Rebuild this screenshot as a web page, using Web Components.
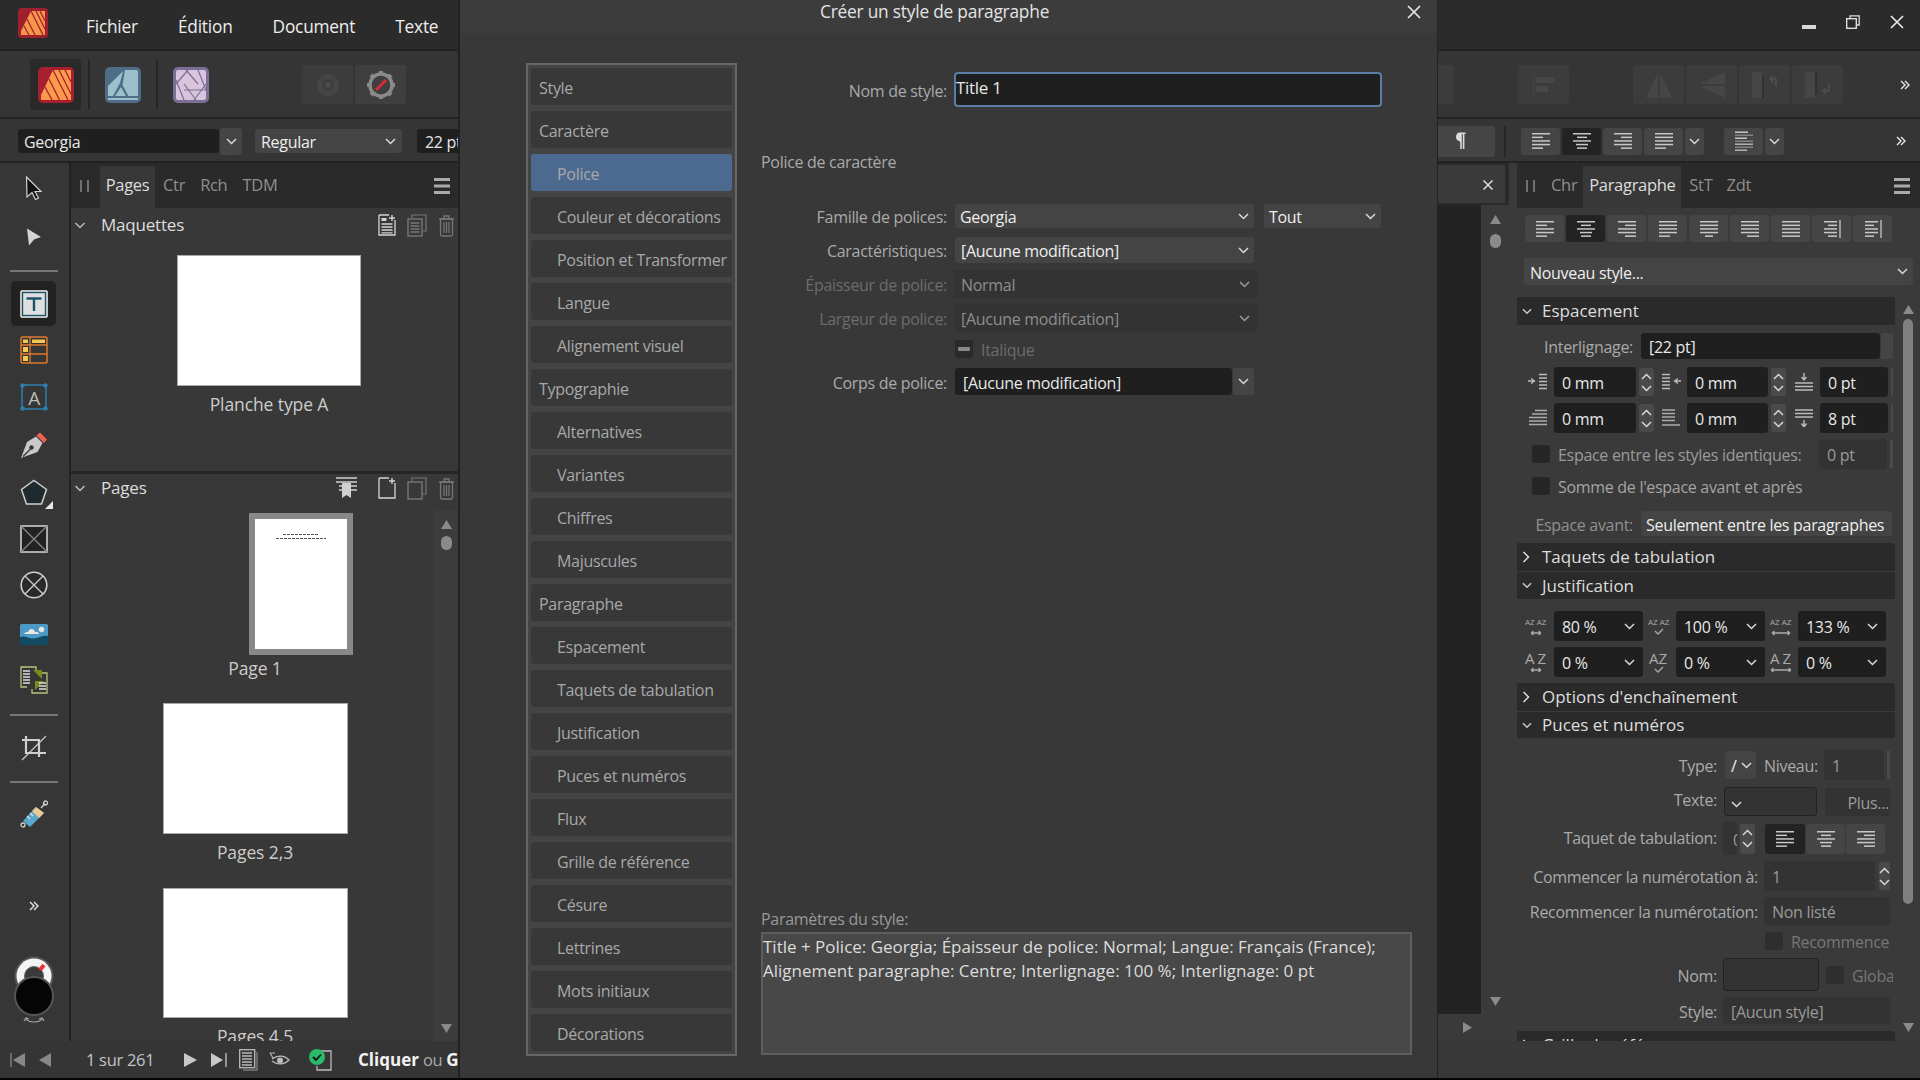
<!DOCTYPE html>
<html lang="fr"><head><meta charset="utf-8"><title>Créer un style de paragraphe</title>
<style>
html,body{margin:0;padding:0;background:#050505;width:1920px;height:1080px;overflow:hidden}
body{font:16px/22px "Open Sans","Noto Sans",sans-serif;letter-spacing:-.3px;color:#ccc}
</style></head><body>
<af-app></af-app>
<script>
const svg=(w,h,inner,vb)=>`<svg xmlns="http://www.w3.org/2000/svg" width="${w}" height="${h}" viewBox="${vb||`0 0 ${w} ${h}`}">${inner}</svg>`;
const bars=(spec,c='#c8c8c8',extra='')=>{
  return svg(18,18,spec.map((s,i)=>`<rect x="${s[0]}" y="${1+i*3.6}" width="${s[1]}" height="1.5" fill="${c}"/>`).join('')+extra);
};
const hb=(a)=>`<path d="M${a} 0v18" stroke="#c8c8c8" stroke-width="1.3"/>`;
const ICONS={
 al:bars([[0,18],[0,11],[0,18],[0,18],[0,11]]),
 ac:bars([[0,18],[4,10],[0,18],[3,12],[4,10]]),
 ar:bars([[0,18],[7,11],[0,18],[0,18],[7,11]]),
 aj:bars([[0,18],[0,18],[0,18],[0,18],[0,11]]),
 ajc:bars([[0,18],[0,18],[0,18],[0,18],[5,8]]),
 ajr:bars([[0,18],[0,18],[0,18],[0,18],[6,12]]),
 aja:bars([[0,18],[0,18],[0,18],[0,18],[0,18]]),
 asp:bars([[1,13],[5,9],[1,13],[1,13],[5,9]],'#c8c8c8',hb(17)),
 asq:bars([[1,13],[1,9],[1,13],[1,13],[1,9]],'#c8c8c8',hb(17)),
 lead:svg(18,20,[[0,13,'#d0d0d0'],[0,18,'#888'],[0,12,'#d0d0d0'],[0,18,'#888'],[0,18,'#bbb'],[0,18,'#888'],[0,12,'#bbb']].map((l,i)=>`<rect x="${l[0]}" y="${i*3+.5}" width="${l[1]}" height="1.4" fill="${l[2]}"/>`).join('')),
 burger:svg(16,16,'<rect width="16" height="3" y="0" fill="#aaa"/><rect width="16" height="3" y="6.5" fill="#aaa"/><rect width="16" height="3" y="13" fill="#aaa"/>'),
 dbl:svg(10,10,'<path d="M1 1l4 4-4 4M5 1l4 4-4 4" fill="none" stroke="#e6e6e6" stroke-width="1.4"/>'),
 para:svg(10,18,'<path d="M3.5 .5h6v1.600H8.400V17H6.800V2.100H5.800V17H4.200V9.400C1.800 9.300 0 7.500 0 5S1.500 .5 3.500 .5z" fill="#ddd"/>'),
 x:svg(14,14,'<path d="M1 1l12 12M13 1L1 13" stroke="#e8e8e8" stroke-width="1.7"/>'),
 xs:svg(10,10,'<path d="M.5.5l9 9M9.500.5l-9 9" stroke="#ddd" stroke-width="1.5"/>'),
 min:svg(14,4,'<rect width="14" height="4" y="0" fill="#d8d8d8"/>'),
 rest:svg(14,14,'<path d="M4 3.500V.8h9.200v9.200H10.500" fill="none" stroke="#ddd" stroke-width="1.3"/><rect x=".7" y="3.700" width="9.600" height="9.600" fill="none" stroke="#ddd" stroke-width="1.400"/>'),
 up:svg(11,11,'<path d="M5.500 1L11 10H0z" fill="#8a8a8a"/>'),
 down:svg(11,11,'<path d="M5.500 10L11 1H0z" fill="#8a8a8a"/>'),
 right:svg(11,11,'<path d="M10 5.500L1 11V0z" fill="#8a8a8a"/>'),
 pub:svg(30,30,'<rect width="30" height="30" rx="4" fill="#9f1f2e"/><path d="M3 27v-4L13 3h14v24z" fill="#f7964b"/><path d="M13 3l12 24M18 3l9 18M22 3l5 10M9 11l8 16M6 18l5 9" stroke="#9f1f2e" stroke-width="1.200" fill="none"/>'),
 pub2:svg(36,36,'<rect width="36" height="36" rx="5" fill="#a81f30"/><path d="M3 33v-5L15 3h18v30z" fill="#fb9a4d"/><path d="M15 3l15 30M21 3l12 24M27 3l6 12M11 12l10.500 21M7 20l7 13" stroke="#a81f30" stroke-width="1.300" fill="none"/>'),
 des:svg(36,36,'<rect width="36" height="36" rx="5" fill="#4f6d87"/><path d="M20 3h11a2 2 0 012 2v24H23.500l-6-11zM3 19L18 4l-3 12-7 13H3zM10 29l6-9 5 9zM3 31h30v2H3z" fill="#9cc1cc"/>'),
 pho:svg(36,36,'<rect width="36" height="36" rx="5" fill="#7b6f95"/><rect x="3" y="3" width="30" height="30" rx="2" fill="#d9c4de"/><path d="M3 17L15 3M13 3l12 14M25 3l8 20H11M33 17L21 33M23 33L11 17M11 33L3 13" stroke="#7b6f95" stroke-width="1.200" fill="none"/>'),
 gearoff:svg(28,28,'<circle cx="14" cy="14" r="11" fill="#454545"/><circle cx="14" cy="14" r="5.500" fill="#3c3c3c"/><circle cx="14" cy="14" r="3" fill="#4c4c4c"/>'),
 gear:svg(28,28,'<circle cx="14" cy="14" r="11" fill="none" stroke="#8a8a8a" stroke-width="3.500"/><path d="M14 0v4M14 24v4M0 14h4M24 14h4M4 4l3 3M21 21l3 3M4 24l3-3M21 7l3-3" stroke="#8a8a8a" stroke-width="4"/><circle cx="14" cy="14" r="9" fill="#3f3f3f"/><path d="M9 19L19 9" stroke="#d92b3a" stroke-width="2.800"/>'),
 dis1:svg(22,22,'<path d="M1 0v22" stroke="#474747" stroke-width="1"/><rect x="3" y="3" width="19" height="6" fill="#474747"/><rect x="3" y="12" width="12" height="6" fill="#474747"/>'),
 dis2:svg(26,26,'<path d="M12 0v26H0zM14 0v26h12z" fill="#464646"/>'),
 dis3:svg(26,26,'<path d="M26 0v12L0 12zM26 14v12L0 14z" fill="#464646"/>'),
 dis4:svg(26,26,'<rect x="0" width="10" height="26" fill="#464646"/><path d="M11 4v22" stroke="#2e2e2e" stroke-width="1.500"/><path d="M24 14V7h-6m3-3l-3 3 3 3" fill="none" stroke="#505050" stroke-width="1.500"/>'),
 dis5:svg(26,26,'<rect x="0" width="10" height="26" fill="#464646"/><path d="M11 0v22" stroke="#2e2e2e" stroke-width="1.500"/><path d="M24 12v7h-6m3-3l-3 3 3 3" fill="none" stroke="#505050" stroke-width="1.500"/>'),
 arrow:svg(18,24,'<path d="M1.500 1L16 15.500h-6l3.500 6.500-3 1.500L7 16.500 2 21z" fill="#111" stroke="#cfcfcf" stroke-width="1.200"/>'),
 node:svg(16,18,'<path d="M1 .5L15 9l-7 2.500L3 17.500z" fill="#d4d4d4"/>'),
 ttool:svg(28,28,'<rect x=".5" y=".5" width="27" height="27" rx="1.500" fill="#dfdfdf" stroke="#c4c4c4"/><rect x="2.500" y="2.500" width="23" height="23" fill="none" stroke="#1d5568" stroke-width="1.400"/><path d="M6.500 8.500h15M14 8v13" stroke="#1d5568" stroke-width="2.400" fill="none"/>'),
 table:svg(28,28,'<rect x="1" y="1" width="26" height="26" rx="1.500" fill="none" stroke="#e0792d" stroke-width="1.500"/><path d="M1 9h26M1 18h26M10 1v26" stroke="#e0792d" stroke-width="1.300"/><g fill="#f2c84f"><rect x="3" y="3.500" width="5" height="3.500"/><rect x="12" y="3.500" width="13" height="3.500"/><rect x="3" y="11" width="5" height="5"/><rect x="3" y="20" width="5" height="5"/></g>'),
 aframe:svg(28,28,'<rect x="2" y="2" width="24" height="24" fill="none" stroke="#2f7eb0" stroke-width="1.500"/><g fill="#2f7eb0"><circle cx="2.500" cy="2.500" r="2.200"/><circle cx="25.500" cy="2.500" r="2.200"/><circle cx="2.500" cy="25.500" r="2.200"/><circle cx="25.500" cy="25.500" r="2.200"/></g><text x="14" y="21.500" text-anchor="middle" font-family="Open Sans" font-size="19" fill="#bdbdbd">A</text>'),
 pen:svg(28,28,'<path d="M20 1.500l7 7-3 3.500-7.500-7.500z" fill="#f2604f"/><path d="M16 5.500l6.500 6.500-5 9L1 27l6-16z" fill="#c9c9c9"/><path d="M3 25.500l7.500-7.500" stroke="#363636" stroke-width="1.200"/><circle cx="11.500" cy="16.500" r="2.200" fill="#363636"/>'),
 penta:svg(34,34,'<path d="M14 1.500L26.500 10.500 21.500 25H6.500L1.500 10.500z" fill="#1e2a2e" stroke="#cfcfcf" stroke-width="1.500"/><path d="M33 22v8h-8z" fill="#e8e8e8"/>'),
 rframe:svg(28,28,'<rect x="1" y="1" width="26" height="26" fill="#222" stroke="#cfcfcf" stroke-width="1.600"/><path d="M1 1l26 26M27 1L1 27" stroke="#888" stroke-width="1.200"/>'),
 cframe:svg(28,28,'<circle cx="14" cy="14" r="12.800" fill="#2a2a2a" stroke="#cfcfcf" stroke-width="1.600"/><path d="M5 5l18 18M23 5L5 23" stroke="#cfcfcf" stroke-width="1.300"/>'),
 image:svg(28,21,'<rect width="28" height="21" rx="1.500" fill="#4a9ac5"/><path d="M0 13c5-2 9 2 14 1.500s9-3.500 14-2.500v8a1 1 0 01-1 1H1a1 1 0 01-1-1z" fill="#114a63"/><path d="M4 10c1-2 3-2 4-2 1-4 6-4 7 0h2c1 0 2 1 2 2z" fill="#e8e8e8"/><circle cx="21.500" cy="5.500" r="2.800" fill="#e3e3e3"/>'),
 linked:svg(28,28,'<path d="M16 5V1H1v20h6M12 23v4h15V7h-5" fill="none" stroke="#b8c47e" stroke-width="1.300"/><path d="M13 4h9v9zM15 24v-9h9z" fill="#7b8c1e"/><path d="M3 5h7M3 8h7M3 11h7M3 14h7M3 17h7M19 17h7M19 20h7M19 23h7" stroke="#ddd" stroke-width="1.500"/>'),
 crop:svg(26,26,'<path d="M1 5h17v17M5 1v17h20" fill="none" stroke="#cfcfcf" stroke-width="2.200"/><path d="M1 25L25 1" stroke="#cfcfcf" stroke-width="1.100"/>'),
 drop:svg(28,28,'<path d="M3 21L16 7l8 6L10 27z" fill="#5aa7cf"/><path d="M12 11L16 7l8 6-5 5z" fill="#eac894"/><path d="M7 16l3 3M10 13l3 3" stroke="#e6e6e6" stroke-width="1.100"/><path d="M21 8L25 3.500" stroke="#d0d0d0" stroke-width="1.300"/><circle cx="25.500" cy="3" r="2" fill="none" stroke="#ccc" stroke-width="1.300"/><circle cx="3" cy="25" r="2" fill="none" stroke="#ccc" stroke-width="1.300"/>'),
 swatch:svg(42,70,'<circle cx="21" cy="20" r="19.500" fill="#555"/><circle cx="21" cy="20" r="17.500" fill="#f4f4f4"/><circle cx="21" cy="20" r="9.500" fill="#3a3a3a" stroke="#666"/><path d="M31 9l-4 5" stroke="#f03030" stroke-width="4"/><circle cx="21" cy="40" r="20" fill="#555"/><circle cx="21" cy="40" r="18" fill="#050505"/><path d="M13 63c3 4 13 4 16 0M11 65l2-3 3 1M31 65l-2-3-3 1" fill="none" stroke="#aaa" stroke-width="1.200"/>'),
 pgadd:svg(18,22,'<path d="M1 1h10M1 1v20h16V6" fill="none" stroke="#d4d4d4" stroke-width="1.300"/><path d="M14 1v6M11 4h6" stroke="#d4d4d4" stroke-width="1.400"/><rect x="3.500" y="4" width="5" height="3" fill="#d4d4d4"/><path d="M3.500 10h11M3.500 13h11M3.500 16h11M3.500 18.800h11" stroke="#d4d4d4" stroke-width="1.300"/>'),
 pgcopy:svg(20,23,'<rect x="1" y="5" width="14" height="17" fill="none" stroke="#777" stroke-width="1.400"/><path d="M5 4V1h14v16h-3" fill="none" stroke="#777" stroke-width="1.200"/><path d="M3.500 9h9M3.500 12h9M3.500 15h9M3.500 18h9" stroke="#777" stroke-width="1.400"/>'),
 pgcopy2:svg(20,23,'<rect x="1" y="5" width="14" height="17" fill="none" stroke="#777" stroke-width="1.400"/><path d="M5 4V1h14v16h-3" fill="none" stroke="#777" stroke-width="1.200"/>'),
 trash:svg(17,23,'<path d="M1 5h15M6 5V2h5v3" fill="none" stroke="#777" stroke-width="1.300"/><rect x="2.500" y="5" width="12" height="17" rx="1.500" fill="none" stroke="#777" stroke-width="1.300"/><path d="M6 8v11M8.500 8v11M11 8v11" stroke="#777" stroke-width="1.200"/>'),
 master:svg(22,22,'<path d="M0 1h21M0 5h21M3 9h3M15 9h6M3 13h3M15 13h6" stroke="#d0d0d0" stroke-width="1.500"/><path d="M6 6h9v15l-4.500-3L6 21z" fill="#d0d0d0"/>'),
 pgnew:svg(18,22,'<path d="M1 1h10M1 1v20h16V6" fill="none" stroke="#d4d4d4" stroke-width="1.300"/><path d="M14 1v6M11 4h6" stroke="#d4d4d4" stroke-width="1.400"/>'),
 first:svg(16,16,'<path d="M1 1v14" stroke="#888" stroke-width="1.300"/><path d="M15 1v14L3 8z" fill="#888"/>'),
 prev:svg(12,16,'<path d="M12 1v14L0 8z" fill="#888"/>'),
 next:svg(13,16,'<path d="M0 1v14l13-7z" fill="#c8c8c8"/>'),
 last:svg(16,16,'<path d="M0 1v14l12-7z" fill="#c8c8c8"/><path d="M15 1v14" stroke="#c8c8c8" stroke-width="1.300"/>'),
 doc:svg(19,22,'<rect x=".7" y=".7" width="15" height="18" fill="none" stroke="#bbb" stroke-width="1.300"/><path d="M3 4h10M3 7h10M3 10h10M3 13h10M3 16h10" stroke="#bbb" stroke-width="1.500"/><path d="M4 21h14V3" fill="none" stroke="#999"/>'),
 eye:svg(21,16,'<path d="M3 7C8 3 15 3 20 8c-5 5-12 5-17 1" fill="none" stroke="#bbb" stroke-width="1.300"/><circle cx="11" cy="8.500" r="3" fill="#bbb"/><path d="M1 1l3 5M1 1l5 0" stroke="#bbb" stroke-width="1.200" fill="none"/>'),
 check:svg(23,22,'<path d="M11 2h11v19H8v-4" fill="none" stroke="#bbb" stroke-width="1.300"/><circle cx="8" cy="8" r="8" fill="#2aba6a"/><path d="M4 8l3 3 5-5.500" fill="none" stroke="#111" stroke-width="1.800"/>'),
 i1:svg(20,18,'<path d="M0 8h6M3 5.500L6.500 8 3 10.500" fill="none" stroke="#bbb" stroke-width="1.300"/><path d="M11 1.500h8M11 5h8M11 8.500h8M11 12h8M11 15.500h8" stroke="#bbb" stroke-width="1.500"/>'),
 i2:svg(20,18,'<path d="M20 8h-6M17 5.500L13.500 8l3.500 2.500" fill="none" stroke="#bbb" stroke-width="1.300"/><path d="M1 1.500h8M1 5h8M1 8.500h8M1 12h8M1 15.500h8" stroke="#bbb" stroke-width="1.500"/>'),
 i3:svg(18,18,'<path d="M9 0v6M6.500 4L9 7l2.500-3" fill="none" stroke="#bbb" stroke-width="1.400"/><path d="M0 10h18M0 13.500h18M0 17h18" stroke="#bbb" stroke-width="1.400"/>'),
 i4:svg(18,18,'<path d="M6 1.500h12M3 5h15M0 8.500h18M0 12h18M0 15.500h18" stroke="#aaa" stroke-width="1.500"/>'),
 i5:svg(18,18,'<path d="M0 1h13M0 4.500h13M0 8h13M0 11.500h13M0 16h18" stroke="#aaa" stroke-width="1.500"/>'),
 i6:svg(18,18,'<path d="M0 1h18M0 4.500h18M0 8h18" stroke="#bbb" stroke-width="1.400"/><path d="M9 11v6M6.500 14.500L9 18l2.500-3.500" fill="none" stroke="#bbb" stroke-width="1.400"/>'),
 i7:svg(22,22,'<g stroke="#aaa" fill="none" stroke-width="1.300"><path d="M6 18h10M6 18l2.500-2M6 18l2.500 2M16 18l-2.500-2M16 18l-2.500 2"/></g><text x="0" y="10" font-family="Open Sans" font-size="8" fill="#aaa" letter-spacing="0">AZ AZ</text>'),
 i8:svg(22,22,'<path d="M7 16l3 3 5-5" stroke="#aaa" stroke-width="1.300" fill="none"/><text x="0" y="10" font-family="Open Sans" font-size="8" fill="#aaa" letter-spacing="0">AZ AZ</text>'),
 i9:svg(22,22,'<g stroke="#aaa" fill="none" stroke-width="1.300"><path d="M2 18h18M2 18l2.500-2M2 18l2.500 2M20 18l-2.500-2M20 18l-2.500 2"/></g><text x="0" y="10" font-family="Open Sans" font-size="8" fill="#aaa" letter-spacing="0">AZ AZ</text>'),
 i10:svg(22,24,'<g stroke="#aaa" fill="none" stroke-width="1.300"><path d="M6 20h10M6 20l2.500-2M6 20l2.500 2M16 20l-2.500-2M16 20l-2.500 2"/></g><text x="0" y="14" font-family="Open Sans" font-size="15" fill="#aaa" letter-spacing="3">AZ</text>'),
 i11:svg(22,24,'<path d="M7 19l3 3 5-5" stroke="#aaa" stroke-width="1.300" fill="none"/><text x="1" y="14" font-family="Open Sans" font-size="15" fill="#aaa" letter-spacing="0">AZ</text>'),
 i12:svg(22,24,'<g stroke="#aaa" fill="none" stroke-width="1.300"><path d="M1 20h20M1 20l2.500-2M1 20l2.500 2M21 20l-2.500-2M21 20l-2.500 2"/></g><text x="0" y="14" font-family="Open Sans" font-size="15" fill="#aaa" letter-spacing="3">AZ</text>'),
};
const BASE=`*{box-sizing:border-box}`;
function def(name,css,html){
  customElements.define(name,class extends HTMLElement{
    connectedCallback(){
      if(this.shadowRoot)return;
      const r=this.attachShadow({mode:'open'});
      r.innerHTML=`<style>${BASE}${css}</style>`+(typeof html==='function'?html(this):html);
    }
  });
}
const chev=(c='#d8d8d8',w=11,up=false)=>svg(w,7,`<path d="${up?'M1 6l4.500-4.500L10 6':'M1 1l4.500 4.500L10 1'}" fill="none" stroke="${c}" stroke-width="1.500"/>`,'0 0 11 7');

def('af-icon',`:host{display:inline-flex;flex:none;line-height:0}svg{display:block}`,h=>ICONS[h.getAttribute('n')]||'');

const KINDS={dark:['#1f1f1f','#e8e8e8'],mid:['#444','#eee'],dim:['#333','#8e8e8e'],off:['#333','#9a9a9a'],line:['#333','#aaa']};
def('af-field',`:host{display:flex;flex:none;align-items:center;justify-content:space-between;border-radius:3px;padding:2px 8px 0;overflow:hidden;white-space:nowrap}svg{margin-top:-2px}`,
 h=>{const k=KINDS[h.getAttribute('k')||'dark'];
  h.style.cssText+=`;width:${h.getAttribute('w')}px;height:${h.getAttribute('h')||30}px;background:${k[0]};color:${k[1]};`+(h.getAttribute('k')=='line'?'border:1px solid #222;':'');
  const c=h.hasAttribute('chev');
  return `<span><slot></slot></span>`+(c?chev(h.getAttribute('cc')||'#d8d8d8'):'');});

def('af-btn',`:host{display:flex;flex:none;align-items:center;justify-content:center;border-radius:3px}`,
 h=>{const bg=h.getAttribute('bg')||'#454545';
  h.style.cssText+=`;width:${h.getAttribute('w')||39}px;height:${h.getAttribute('h')||27}px;background:${bg};`;
  return h.hasAttribute('chev')?chev():`<slot></slot>`;});

def('af-spin',`:host{display:flex;flex:none;flex-direction:column;align-items:center;justify-content:center;gap:5px;width:15px;height:28px;background:#4a4a4a;border-radius:3px}`,
 ()=>chev('#d8d8d8',11,true)+chev());

def('af-check',`:host{display:block;flex:none;width:18px;height:18px;background:#262626;border-radius:3px}`,'');

def('af-menubar',`:host{display:flex;align-items:center;height:51px;flex:none;background:#2b2b2b;border-bottom:2px solid #222;padding:4px 0 0 18px;color:#eee;font-size:17.3px;letter-spacing:-.2px}
 .b{margin-left:40px}`,
 `<af-icon n="pub" style="margin-bottom:7px"></af-icon><span style="margin-left:38px">Fichier</span><span class="b">Édition</span><span class="b">Document</span><span class="b">Texte</span>`);

def('af-toolbar',`:host{display:flex;align-items:center;height:68px;flex:none;background:#353535;border-bottom:2px solid #222;padding:1px 0 0 30px}
 .p{width:51px;height:51px;background:#2a2a2a;border-radius:3px;display:flex;align-items:center;justify-content:center}
 .s{width:2px;height:49px;background:#252525}`,
 `<div class="p"><af-icon n="pub2"></af-icon></div><div class="s" style="margin-left:7px"></div><af-icon n="des" style="margin-left:15px"></af-icon><div class="s" style="margin-left:15px"></div><af-icon n="pho" style="margin-left:15px"></af-icon>
 <af-btn w="51" h="39" bg="#3c3c3c" style="margin-left:93px"><af-icon n="gearoff"></af-icon></af-btn><af-btn w="51" h="39" bg="#3f3f3f" style="margin-left:2px"><af-icon n="gear"></af-icon></af-btn>`);

def('af-context',`:host{display:flex;align-items:center;height:44px;flex:none;background:#353535;border-bottom:2px solid #222;padding:2px 0 0 18px;overflow:hidden;color:#e6e6e6}`,
 `<af-field w="201" h="24" k="dark" style="padding-left:6px;color:#ccc">Georgia</af-field><af-btn w="22" h="27" chev style="margin-left:1px"></af-btn>
  <af-field w="147" h="24" k="mid" chev style="margin-left:13px;padding-left:6px;padding-right:6px">Regular</af-field><af-field w="60" h="24" k="dark" style="margin-left:15px">22 pt</af-field>`);

def('af-tools',`:host{display:flex;flex-direction:column;align-items:center;width:71px;flex:none;background:#363636;border-right:2px solid #222;padding-right:2px}
 .c{width:45px;display:flex;justify-content:center;flex:none}.s{width:48px;height:2px;background:#777;flex:none}
 .act{background:#222;border-radius:5px;height:45px;align-items:center}`,
 `<div class="c" style="margin-top:13px"><af-icon n="arrow"></af-icon></div>
  <div class="c" style="margin-top:28px"><af-icon n="node"></af-icon></div>
  <div class="s" style="margin-top:24px"></div>
  <div class="c act" style="margin-top:9px"><af-icon n="ttool"></af-icon></div>
  <div class="c" style="margin-top:10px"><af-icon n="table"></af-icon></div>
  <div class="c" style="margin-top:19px"><af-icon n="aframe"></af-icon></div>
  <div class="c" style="margin-top:20px"><af-icon n="pen"></af-icon></div>
  <div class="c" style="margin-top:20px"><af-icon n="penta" style="margin-left:6px"></af-icon></div>
  <div class="c" style="margin-top:12px"><af-icon n="rframe"></af-icon></div>
  <div class="c" style="margin-top:18px"><af-icon n="cframe"></af-icon></div>
  <div class="c" style="margin-top:25px"><af-icon n="image"></af-icon></div>
  <div class="c" style="margin-top:21px"><af-icon n="linked"></af-icon></div>
  <div class="s" style="margin-top:20px"></div>
  <div class="c" style="margin-top:19px"><af-icon n="crop"></af-icon></div>
  <div class="s" style="margin-top:20px"></div>
  <div class="c" style="margin-top:17px"><af-icon n="drop"></af-icon></div>
  <div class="c" style="margin-top:73px"><af-icon n="dbl"></af-icon></div>
  <div class="c" style="margin-top:45px"><af-icon n="swatch"></af-icon></div>`);

def('af-tabs',`:host{display:flex;align-items:flex-end;height:45px;flex:none;background:#2a2a2a;font-size:16.5px;color:#8f8f8f}
 .g{width:9px;height:12px;border:solid #707070;border-width:0 2px;margin-bottom:16px;flex:none}
 .t{height:42px;line-height:38px}.on{background:#383838;color:#ddd;text-align:center}
 .h{margin-left:auto;align-self:center}`,
 h=>{const o=JSON.parse(h.getAttribute('d'));
  return `<div class="g" style="margin-left:${o.g}px"></div>`+o.t.map(t=>`<div class="t ${t[2]?'on':''}" style="margin-left:${t[0]}px;${t[2]?'width:'+t[2]+'px':''}">${t[1]}</div>`).join('')+`<af-icon class="h" n="burger" style="margin-right:${o.r}px"></af-icon>`;});

def('af-phead',`:host{display:flex;align-items:center;flex:none;height:34px;color:#ddd;font-size:17px;letter-spacing:-.2px}
 .t{margin-left:15px;margin-top:-1px}.c{margin-left:3px;display:flex}.k{margin-left:auto;display:flex;align-items:center}`,
 h=>`<span class="c">${chev('#bbb',12)}</span><span class="t"><slot></slot></span><span class="k"><slot name="k"></slot></span>`);

def('af-thumb',`:host{display:flex;flex-direction:column;align-items:center;flex:none}
 .p{background:#fff;border:1px solid #aaa;flex:none}.l{font-size:17.5px;color:#ccc;letter-spacing:-.1px;line-height:22px}`,
 h=>`<div class="p" style="width:${h.getAttribute('w')}px;height:${h.getAttribute('ht')}px"></div><div class="l" style="margin-top:${h.getAttribute('lm')}px"><slot></slot></div>`);

def('af-pages',`:host{display:flex;flex-direction:column;width:387px;flex:none;background:#383838;min-height:0}
 .m{height:263px;flex:none;display:flex;flex-direction:column;align-items:center;background:#383838}
 af-phead{width:100%}
 .d{height:3px;background:#252525;flex:none}
 .ic{display:flex;align-items:center}
 .main{flex:1;display:flex;min-height:0;margin-top:8px}
 .list{width:363px;flex:none;overflow:hidden;display:flex;flex-direction:column;align-items:center;padding:3px 0 0 5px}
 .sel{width:185px;display:flex;justify-content:flex-end;flex:none;margin-right:-1px}
 .frame{width:104px;height:142px;background:#888;padding:6px;margin-right:-5px;flex:none}
 .pg{width:92px;height:130px;background:#fff;padding-top:15px}
 .gk{height:1px;margin:0 auto 3px;background:repeating-linear-gradient(90deg,#555 0 3px,#fff 3px 4px)}
 .l{font-size:17.5px;color:#ccc;letter-spacing:-.1px;line-height:22px;flex:none}
 .sb{width:24px;flex:none;background:#3c3c3c;display:flex;flex-direction:column;align-items:center;padding:9px 0 0 1px}
 .dot{width:11px;height:14px;background:#8a8a8a;border-radius:6px;margin-top:6px}`,
 `<af-tabs d='{"g":9,"r":8,"t":[[11,"Pages",55],[8,"Ctr"],[15,"Rch"],[15,"TDM"]]}'></af-tabs>
 <div class="m"><af-phead>Maquettes<div class="ic" slot="k"><af-icon n="pgadd"></af-icon><af-icon n="pgcopy" style="margin-left:11px"></af-icon><af-icon n="trash" style="margin:0 3px 0 11px"></af-icon></div></af-phead>
 <af-thumb w="184" ht="131" lm="7" style="margin-top:13px;margin-left:9px">Planche type A</af-thumb></div>
 <div class="d"></div>
 <af-phead style="height:28px">Pages<div class="ic" slot="k"><af-icon n="master"></af-icon><af-icon n="pgnew" style="margin-left:20px"></af-icon><af-icon n="pgcopy2" style="margin-left:11px"></af-icon><af-icon n="trash" style="margin:0 3px 0 11px"></af-icon></div></af-phead>
 <div class="main"><div class="list">
   <div class="sel"><div class="frame"><div class="pg"><div class="gk" style="width:36px"></div><div class="gk" style="width:50px"></div></div></div></div>
   <div class="l" style="margin-top:2px">Page 1</div>
   <af-thumb w="185" ht="131" lm="7" style="margin-top:24px">Pages 2,3</af-thumb>
   <af-thumb w="185" ht="130" lm="7" style="margin-top:25px">Pages 4,5</af-thumb>
 </div><div class="sb"><af-icon n="up"></af-icon><div class="dot"></div><div style="flex:1"></div><af-icon n="down" style="margin-bottom:7px"></af-icon></div></div>`);

def('af-status',`:host{display:flex;align-items:center;height:37px;flex:none;background:#353535;overflow:hidden;white-space:nowrap;color:#c4c4c4;font-size:16.5px;padding-left:10px}
 b{color:#f2f2f2;font-weight:700;letter-spacing:0;font-size:17px}`,
 `<af-icon n="first"></af-icon><af-icon n="prev" style="margin-left:13px"></af-icon><span style="margin-left:35px;width:82px;flex:none">1 sur 261</span><af-icon n="next" style="margin-left:16px"></af-icon><af-icon n="last" style="margin-left:14px"></af-icon>
 <af-icon n="doc" style="margin-left:12px"></af-icon><af-icon n="eye" style="margin-left:11px"></af-icon><af-icon n="check" style="margin-left:19px"></af-icon><span style="margin-left:26px"><b>Cliquer</b> <span style="color:#aaa">ou</span> <b>Glisser</b></span>`);

def('af-left',`:host{display:flex;flex-direction:column;width:460px;flex:none;height:1078px;background:#222;padding-right:2px}
 .body{flex:1;display:flex;min-height:0}`,
 `<af-menubar></af-menubar><af-toolbar></af-toolbar><af-context></af-context>
 <div class="body"><af-tools></af-tools><af-pages></af-pages></div><af-status></af-status>`);

def('af-navitem',`:host{display:flex;align-items:center;height:37px;flex:none;background:#383838;border-radius:3px;color:#a8a8a8;padding-left:8px;padding-top:3px;white-space:nowrap}
 :host([sub]){padding-left:26px}:host([on]){background:#4c6a8f}`,`<slot></slot>`);

const NAV=[['Style'],['Caractère'],['Police',1,1],['Couleur et décorations',1],['Position et Transformer',1],['Langue',1],['Alignement visuel',1],['Typographie'],['Alternatives',1],['Variantes',1],['Chiffres',1],['Majuscules',1],['Paragraphe'],['Espacement',1],['Taquets de tabulation',1],['Justification',1],['Puces et numéros',1],['Flux',1],['Grille de référence',1],['Césure',1],['Lettrines',1],['Mots initiaux',1],['Décorations',1]];
def('af-nav',`:host{display:flex;flex-direction:column;gap:6px;width:211px;height:993px;flex:none;background:#444;border:2px solid #666;padding:3px}`,
 NAV.map(n=>`<af-navitem ${n[1]?'sub':''} ${n[2]?'on':''}>${n[0]}</af-navitem>`).join(''));

def('af-dform',`:host{display:flex;flex-direction:column;width:651px;margin-left:24px;flex:none;height:993px;color:#aaa}
 .r{display:flex;align-items:center;flex:none}
 .l{width:186px;text-align:right;flex:none;white-space:nowrap;padding-top:2px}.o{color:#6c6c6c}
 .box{height:123px;border:2px solid #5e5e5e;background:#484848;color:#dcdcdc;line-height:24px;padding-top:1px;flex:none;font-size:17px;letter-spacing:0}`,
 `<div class="r" style="margin-top:9px"><div class="l">Nom de style:</div>
   <af-field w="428" h="35" k="dark" style="margin-left:7px;border:2px solid #5c7da8;padding:0 0 4px 0;border-radius:4px;font-size:17px">Title 1</af-field></div>
  <div class="r" style="margin-top:44px;height:22px">Police de caractère</div>
  <div class="r" style="margin-top:31px"><div class="l">Famille de polices:</div><af-field w="299" h="24" k="mid" chev style="margin-left:8px;padding-left:5px;padding-right:5px">Georgia</af-field><af-field w="117" h="24" k="mid" chev style="margin-left:10px;padding-left:5px;padding-right:5px">Tout</af-field></div>
  <div class="r" style="margin-top:9px"><div class="l">Caractéristiques:</div><af-field w="299" h="26" k="mid" chev style="margin-left:8px;padding-left:6px;padding-right:5px">[Aucune modification]</af-field></div>
  <div class="r" style="margin-top:7px"><div class="l o">Épaisseur de police:</div><af-field w="303" h="28" k="dim" chev cc="#999" style="margin-left:7px;padding:2px 7px 0 7px;color:#777">Normal</af-field></div>
  <div class="r" style="margin-top:6px"><div class="l o">Largeur de police:</div><af-field w="303" h="28" k="dim" chev cc="#999" style="margin-left:7px;padding:2px 7px 0 7px;color:#777">[Aucune modification]</af-field></div>
  <div class="r" style="margin-top:8px;height:18px;padding-left:194px"><div style="width:18px;height:18px;background:#2a2a2a;border-radius:3px;display:flex;align-items:center;justify-content:center"><div style="width:12px;height:4px;background:#888;border-radius:1px"></div></div><span class="o" style="margin-left:8px;padding-top:2px">Italique</span></div>
  <div class="r" style="margin-top:10px"><div class="l">Corps de police:</div><af-field w="277" h="27" k="dark" style="margin-left:8px">[Aucune modification]</af-field><af-btn w="21" h="27" chev style="margin-left:1px;border-radius:0 3px 3px 0"></af-btn></div>
  <div style="flex:1"></div>
  <div style="flex:none;margin-bottom:2px;color:#999">Paramètres du style:</div>
  <div class="box" style="margin-bottom:1px">Title + Police: Georgia; Épaisseur de police: Normal; Langue: Français (France);<br>Alignement paragraphe: Centre; Interlignage: 100 %; Interlignage: 0 pt</div>`);

def('af-dialog',`:host{display:flex;flex-direction:column;width:977px;flex:none;height:1078px;background:#383838}
 .t{height:33px;background:#3c3c3c;display:flex;align-items:center;padding-left:360px;color:#e4e4e4;font-size:17.3px;letter-spacing:-.2px;padding-bottom:10px;flex:none}
 .b{display:flex;padding:30px 0 0 66px}`,
 `<div class="t">Créer un style de paragraphe<af-icon n="x" style="margin-left:auto;margin-right:16px"></af-icon></div>
 <div class="b"><af-nav></af-nav><af-dform></af-dform></div>`);

def('af-sect',`:host{display:flex;align-items:center;flex:none;background:#2a2a2a;border-radius:3px 3px 0 0;color:#ddd;font-size:17px;letter-spacing:0;padding-left:6px;margin-left:-1px}
 .c{width:12px;display:flex;flex:none}.t{margin-left:8px;white-space:nowrap}`,
 h=>{h.style.height=(h.getAttribute('h')||28)+'px';
   const c=h.hasAttribute('closed')?`<svg width="9" height="12" viewBox="0 0 9 12"><path d="M1.500 1l5 5-5 5" fill="none" stroke="#ddd" stroke-width="1.500"/></svg>`:chev('#ccc',10);
   return `<span class="c">${c}</span><span class="t"><slot></slot></span>`;});

const abtns=(a,dark)=>a.map((n,i)=>`<af-btn w="39" h="27" bg="${i==dark?'#232323':'#454545'}" style="margin-left:${i?2:0}px"><af-icon n="${n}"></af-icon></af-btn>`).join('');

def('af-para',`:host{display:flex;flex-direction:column;flex:1;min-width:0;background:#3a3a3a}
 .top{display:flex;padding:7px 0 0 8px;flex:none;height:35px}
 .scroll{flex:1;display:flex;min-height:0;margin-top:12px}
 .c{width:378px;flex:none;overflow:hidden;display:flex;flex-direction:column;min-height:0}
 af-sect{width:379px}
 .sb{width:26px;flex:none;display:flex;flex-direction:column;align-items:center;padding-top:7px}
 .th{width:10px;height:585px;background:#808080;border-radius:5px;margin-top:4px}
 .r{display:flex;align-items:center;flex:none;width:376px;overflow:hidden;white-space:nowrap}
 .l{text-align:right;flex:none;color:#aaa;padding-top:2px}.d{color:#7c7c7c}
 .r>span{padding-top:2px}
 .st{width:3px;height:28px;background:#4a4a4a;flex:none;margin-left:3px}
 af-icon.i{width:20px;justify-content:center}`,
 `<af-tabs d='{"g":9,"r":10,"t":[[16,"Chr"],[6,"Paragraphe",98],[8,"StT"],[14,"Zdt"]]}'></af-tabs>
 <div class="top">${abtns(['al','ac','ar','aj','ajc','ajr','aja','asp','asq'],1)}</div>
 <af-field w="389" h="27" k="mid" chev style="margin:15px 0 0 7px;padding-left:6px;padding-right:5px;font-size:16px">Nouveau style...</af-field>
 <div class="scroll"><div class="c">
  <af-sect>Espacement</af-sect>
  <div class="r" style="margin-top:8px"><div class="l" style="width:116px">Interlignage:</div><af-field w="239" h="26" style="margin-left:8px">[22 pt]</af-field><af-btn w="14" h="26" style="margin-left:1px;border-radius:0"></af-btn></div>
  <div class="r" style="margin-top:8px;padding-left:11px"><af-icon class="i" n="i1"></af-icon><af-field w="82" style="margin-left:6px">0 mm</af-field><af-spin style="margin-left:3px"></af-spin><af-icon class="i" n="i2" style="margin-left:7px"></af-icon><af-field w="81" style="margin-left:6px">0 mm</af-field><af-spin style="margin-left:3px"></af-spin><af-icon class="i" n="i3" style="margin-left:8px"></af-icon><af-field w="68" style="margin-left:6px">0 pt</af-field><div class="st"></div></div>
  <div class="r" style="margin-top:6px;padding-left:11px"><af-icon class="i" n="i4"></af-icon><af-field w="82" style="margin-left:6px">0 mm</af-field><af-spin style="margin-left:3px"></af-spin><af-icon class="i" n="i5" style="margin-left:7px"></af-icon><af-field w="81" style="margin-left:6px">0 mm</af-field><af-spin style="margin-left:3px"></af-spin><af-icon class="i" n="i6" style="margin-left:8px"></af-icon><af-field w="68" style="margin-left:6px">8 pt</af-field><div class="st"></div></div>
  <div class="r" style="margin-top:6px;padding-left:15px"><af-check></af-check><span class="d" style="margin-left:8px;width:253px;color:#9a9a9a">Espace entre les styles identiques:</span><af-field w="68" k="off" style="color:#808080;margin-left:8px">0 pt</af-field><div class="st"></div></div>
  <div class="r" style="margin-top:6px;height:22px;padding-left:15px"><af-check></af-check><span style="margin-left:8px;color:#a4a4a4">Somme de l'espace avant et après</span></div>
  <div class="r" style="margin-top:14px"><div class="l" style="width:116px;color:#909090">Espace avant:</div><af-field w="251" h="25" k="mid" style="margin-left:8px;padding-left:5px;color:#f0f0f0">Seulement entre les paragraphes</af-field></div>
  <af-sect closed style="margin-top:7px">Taquets de tabulation</af-sect>
  <af-sect h="27" style="margin-top:1px">Justification</af-sect>
  <div class="r" style="margin-top:12px;padding-left:8px"><af-icon class="i" n="i7" style="width:22px"></af-icon><af-field w="89" chev style="margin-left:7px">80 %</af-field><af-icon class="i" n="i8" style="margin-left:5px;width:22px"></af-icon><af-field w="89" chev style="margin-left:6px">100 %</af-field><af-icon class="i" n="i9" style="margin-left:5px;width:22px"></af-icon><af-field w="88" chev style="margin-left:6px">133 %</af-field></div>
  <div class="r" style="margin-top:6px;padding-left:8px"><af-icon class="i" n="i10" style="width:22px"></af-icon><af-field w="89" chev style="margin-left:7px">0 %</af-field><af-icon class="i" n="i11" style="margin-left:5px;width:22px"></af-icon><af-field w="89" chev style="margin-left:6px">0 %</af-field><af-icon class="i" n="i12" style="margin-left:5px;width:22px"></af-icon><af-field w="88" chev style="margin-left:6px">0 %</af-field></div>
  <af-sect closed style="margin-top:6px">Options d'enchaînement</af-sect>
  <af-sect h="26" style="margin-top:1px">Puces et numéros</af-sect>
  <div class="r" style="margin-top:12px"><div class="l" style="width:200px">Type:</div><af-field w="31" h="28" k="mid" chev style="margin-left:8px;padding:2px 4px 0 6px">/</af-field><span style="margin-left:8px;width:54px;flex:none;color:#aaa">Niveau:</span><af-field w="60" k="off" style="margin-left:6px">1</af-field><div class="st"></div></div>
  <div class="r" style="margin-top:7px"><div class="l" style="width:200px;padding:0 0 4px">Texte:</div><af-field w="93" h="29" k="line" style="margin-left:7px;justify-content:flex-start;padding:0 0 0 6px"><span>${chev()}</span></af-field><af-field w="65" h="28" k="off" style="margin-left:8px;color:#777;justify-content:flex-end;padding-right:1px">Plus...</af-field></div>
  <div class="r" style="margin-top:6px"><div class="l" style="width:200px;padding:0 0 2px">Taquet de tabulation:</div><af-field w="14" h="33" k="off" style="margin-left:6px;padding:2px 0 0 10px">0</af-field><af-spin style="margin-left:3px;height:30px"></af-spin><af-btn w="40" h="30" bg="#232323" style="margin-left:10px"><af-icon n="al"></af-icon></af-btn><af-btn w="39" h="30" style="margin-left:1px"><af-icon n="ac"></af-icon></af-btn><af-btn w="39" h="30" style="margin-left:1px"><af-icon n="ar"></af-icon></af-btn></div>
  <div class="r" style="margin-top:6px"><div class="l" style="width:241px">Commencer la numérotation à:</div><af-field w="111" k="off" style="margin-left:6px">1</af-field><af-spin style="margin-left:4px;height:28px;width:11px"></af-spin></div>
  <div class="r" style="margin-top:6px"><div class="l" style="width:241px">Recommencer la numérotation:</div><af-field w="126" h="28" k="off" style="margin-left:6px">Non listé</af-field></div>
  <div class="r" style="margin-top:6px;height:20px;padding-left:248px"><af-check style="background:#2e2e2e"></af-check><span style="margin-left:8px;color:#777">Recommence</span></div>
  <div class="r" style="margin-top:7px"><div class="l" style="width:200px">Nom:</div><af-field w="96" h="33" k="line" style="margin-left:6px"></af-field><af-check style="margin-left:7px;background:#2e2e2e"></af-check><span style="margin-left:8px;color:#777">Global</span></div>
  <div class="r" style="margin-top:6px"><div class="l" style="width:200px">Style:</div><af-field w="167" h="27" k="off" style="margin-left:6px">[Aucun style]</af-field></div>
  <af-sect closed style="margin-top:7px">Grille de référence</af-sect>
 </div>
 <div class="sb"><af-icon n="up"></af-icon><div class="th"></div><div style="flex:1"></div><af-icon n="down" style="margin-bottom:8px"></af-icon></div></div>`);

def('af-right',`:host{display:flex;flex-direction:column;width:483px;flex:none;height:1078px;background:#383838;border-left:1px solid #222}
 .m{height:51px;flex:none;background:#2b2b2b;border-bottom:2px solid #222;display:flex;align-items:center}
 .t{height:68px;flex:none;background:#353535;border-bottom:2px solid #222;display:flex;align-items:center;padding-top:1px}
 .x{height:44px;flex:none;background:#353535;border-bottom:2px solid #222;display:flex;align-items:center;padding-top:2px}
 .b{flex:1;display:flex;min-height:0}
 .sub{width:71px;flex:none;display:flex;flex-direction:column;background:#2a2a2a}
 .close{height:38px;margin-top:2px;background:#3a3a3a;display:flex;align-items:center;justify-content:flex-end;padding:1px 12px 0 0;flex:none;width:67px}
 .cv{flex:1;display:flex;min-height:0;margin-top:2px}
 .dk{width:43px;background:#222}.sb{width:28px;background:#3a3a3a;display:flex;flex-direction:column;align-items:center;padding-top:9px}
 .dot{width:11px;height:14px;border-radius:6px;background:#8a8a8a;margin-top:9px}
 .hz{height:27px;flex:none;background:#3a3a3a;display:flex;align-items:center;padding-left:24px}
 .gap{width:8px;flex:none;background:#3a3a3a}
 .foot{height:37px;flex:none;background:#383838}`,
 `<div class="m"><af-icon n="min" style="margin:0 0 0 364px;align-self:flex-start;margin-top:25px"></af-icon><af-icon n="rest" style="margin:0 0 5px 30px"></af-icon><af-icon n="x" style="margin:0 0 5px 30px"></af-icon></div>
 <div class="t"><af-btn w="16" h="39" bg="#3c3c3c" style="border-radius:0 3px 3px 0"></af-btn><af-btn w="51" h="39" bg="#3c3c3c" style="margin-left:64px"><af-icon n="dis1"></af-icon></af-btn><af-btn w="51" h="39" bg="#3c3c3c" style="margin-left:64px"><af-icon n="dis2"></af-icon></af-btn><af-btn w="51" h="39" bg="#3c3c3c" style="margin-left:2px"><af-icon n="dis3"></af-icon></af-btn><af-btn w="51" h="39" bg="#3c3c3c" style="margin-left:2px"><af-icon n="dis4"></af-icon></af-btn><af-btn w="51" h="39" bg="#3c3c3c" style="margin-left:2px"><af-icon n="dis5"></af-icon></af-btn><af-icon n="dbl" style="margin-left:57px"></af-icon></div>
 <div class="x"><af-btn w="57" h="31" style="border-radius:0 4px 4px 0"><af-icon n="para" style="margin-right:12px"></af-icon></af-btn><div style="width:2px;height:31px;background:#262626;margin-left:9px"></div><div style="display:flex;margin-left:15px">${abtns(['al','ac','ar','aj'],1)}<af-btn w="19" h="27" chev style="margin-left:2px"></af-btn></div><af-btn w="39" h="27" style="margin-left:20px"><af-icon n="lead"></af-icon></af-btn><af-btn w="19" h="27" chev style="margin-left:2px"></af-btn><af-icon n="dbl" style="margin-left:112px"></af-icon></div>
 <div class="b"><div class="sub"><div class="close"><af-icon n="xs"></af-icon></div><div class="cv"><div class="dk"></div><div class="sb"><af-icon n="up"></af-icon><div class="dot"></div><div style="flex:1"></div><af-icon n="down" style="margin-bottom:7px"></af-icon></div></div><div class="hz"><af-icon n="right"></af-icon></div></div><div class="gap"></div><af-para></af-para></div>
 <div class="foot"></div>`);

def('af-app',`:host{display:flex;width:1920px;height:1078px;overflow:hidden}`,`<af-left></af-left><af-dialog></af-dialog><af-right></af-right>`);
</script>
</body></html>
